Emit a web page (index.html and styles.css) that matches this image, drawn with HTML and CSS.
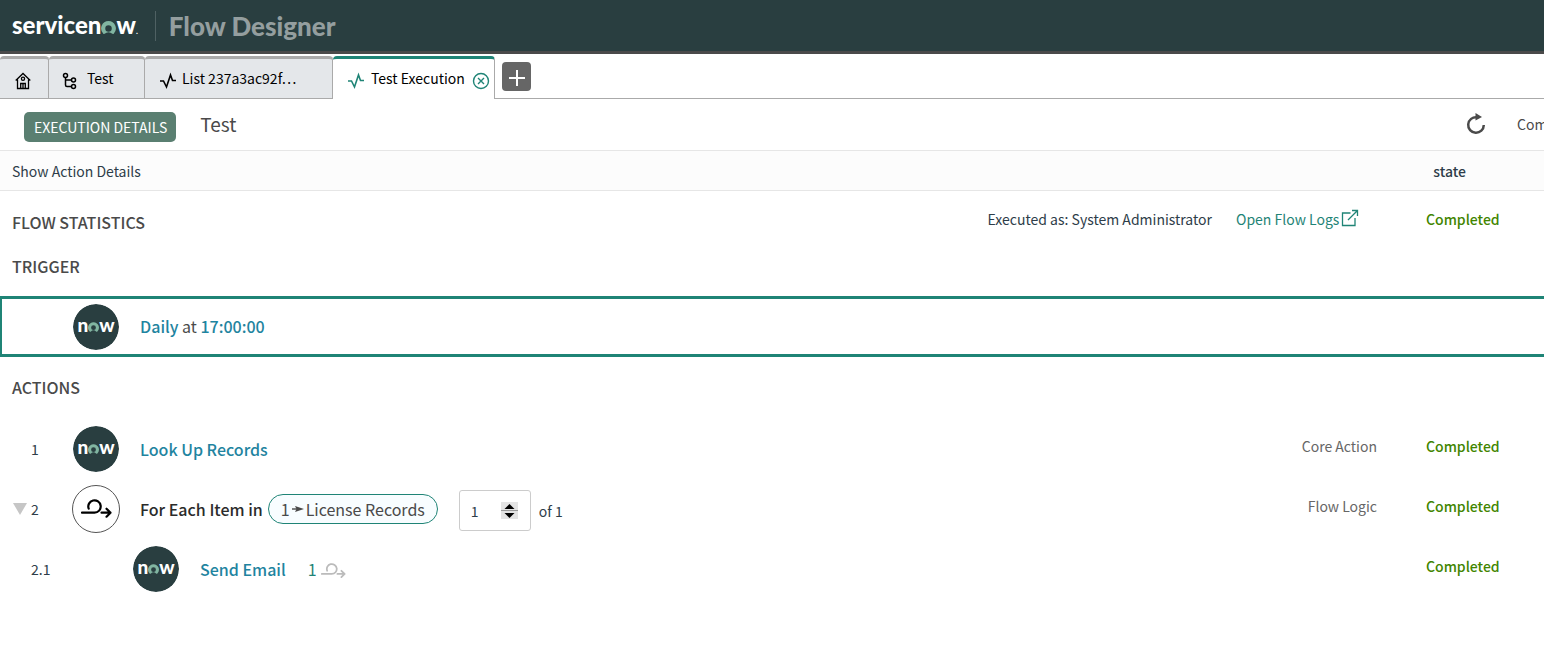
FILE: index.html
```html
<!DOCTYPE html>
<html lang="en">
<head>
<meta charset="utf-8">
<meta name="viewport" content="width=device-width, initial-scale=1">
<title>Flow Designer</title>
<link rel="stylesheet" href="styles.css">
</head>
<body>
<svg class="defs" aria-hidden="true">
  <symbol id="ring" viewBox="0 0 16 14"><path fill="currentColor" d="M8 0a8 8 0 0 0-5.600 13.600c.4.4 1 .5 1.500.2a6 6 0 0 1 8.200 0c.5.3 1.100.2 1.500-.2A8 8 0 0 0 8 0Zm0 11.500a3.500 3.500 0 1 1 0-7 3.500 3.500 0 0 1 0 7Z"/></symbol>
  <symbol id="pulse" viewBox="0 0 16 16"><path d="M0 8h3.500l3 6 4-12 2 5.500H16" fill="none" stroke="currentColor" stroke-width="1.600"/></symbol>
  <symbol id="loop" viewBox="0 0 32 20"><path d="M2 13.700h12.500a6.200 6.200 0 1 0-5.800-4M21.500 13.700h9M26.500 9.700l4 4-4 4" fill="none" stroke="currentColor" stroke-width="2.200" stroke-linecap="round" stroke-linejoin="round"/></symbol>
</svg>

<header class="banner">
  <div class="logo">servicen<svg class="logo-ring"><use href="#ring"/></svg>w<span class="logo-dot">.</span></div>
  <h1 class="product">Flow Designer</h1>
</header>

<nav class="tabs">
  <button class="tab tab-home" aria-label="Home">
    <svg class="icon" viewBox="0 0 16 18" fill="none" stroke="currentColor" stroke-width="1.300"><path d="M.7 8.500 8 1.500l7.300 7M2.500 7.500v9h11v-9M5.700 16.500v-5h4.600v5M8 11.500v5"/><circle cx="8" cy="6.800" r="1.600"/></svg>
  </button>
  <button class="tab tab-flow">
    <svg class="icon" viewBox="0 0 16 18" fill="none" stroke="currentColor" stroke-width="1.500"><circle cx="3.500" cy="3.500" r="2"/><circle cx="11.500" cy="8" r="2"/><circle cx="11.500" cy="14.500" r="2"/><path d="M3.500 5.500v7.500q0 1.500 1.500 1.500h4.500M3.500 8h6"/></svg>
    Test
  </button>
  <button class="tab tab-list"><svg class="icon"><use href="#pulse"/></svg>List 237a3ac92f…</button>
  <div class="tab tab-active">
    <svg class="icon accent"><use href="#pulse"/></svg>Test Execution
    <button class="close" aria-label="Close tab"><svg viewBox="0 0 18 18" fill="none" stroke="currentColor" stroke-width="1.400"><circle cx="9" cy="9" r="7.500"/><path d="m6 6 6 6M12 6l-6 6"/></svg></button>
  </div>
  <div class="tab-rest">
    <button class="add" aria-label="New tab"><svg viewBox="0 0 16 16"><path d="M8 0v16M0 8h16" stroke="currentColor" stroke-width="2"/></svg></button>
  </div>
</nav>

<main>
  <div class="title-row">
    <span class="badge">EXECUTION DETAILS</span>
    <h2 class="flow-name">Test</h2>
    <button class="refresh" aria-label="Refresh"><svg viewBox="0 0 20 22"><path d="M11 4.200A7.800 7.800 0 1 0 17.800 12" fill="none" stroke="currentColor" stroke-width="2.500"/><path d="M9.500 0v7.500L16 4Z" fill="currentColor"/></svg></button>
    <span class="overall">Completed</span>
  </div>

  <div class="columns-row">
    <button class="link-button">Show Action Details</button>
    <span class="state-title">state</span>
  </div>

  <section class="stats">
    <h3>FLOW STATISTICS</h3>
    <span class="executed">Executed as: System Administrator</span>
    <a class="logs" href="#logs">Open Flow Logs<svg viewBox="0 0 18 18" fill="none" stroke="currentColor" stroke-width="1.300"><path d="M9.500 4H1.500v12.500H14V9M7 11l9-9M11 1.500h5.500V7"/></svg></a>
    <span class="state">Completed</span>
  </section>

  <section>
    <h3 class="section-title">TRIGGER</h3>
    <div class="row trigger">
      <span class="number"></span>
      <span class="now">n<svg><use href="#ring"/></svg>w</span>
      <p class="name"><a href="#daily">Daily</a> at <a href="#time">17:00:00</a></p>
    </div>
  </section>

  <section>
    <h3 class="section-title actions-title">ACTIONS</h3>
    <div class="row">
      <span class="number">1</span>
      <span class="now">n<svg><use href="#ring"/></svg>w</span>
      <a class="name" href="#lookup">Look Up Records</a>
      <span class="kind">Core Action</span>
      <span class="state">Completed</span>
    </div>
    <div class="row">
      <button class="toggle" aria-label="Collapse step 2"><svg viewBox="0 0 14 12"><path d="M0 0h14L7 12Z" fill="currentColor"/></svg></button>
      <span class="number">2</span>
      <span class="logic"><svg><use href="#loop"/></svg></span>
      <strong class="name each">For Each Item in</strong>
      <span class="pill">1<svg viewBox="0 0 12 8"><path d="M0 4h5" stroke="currentColor" stroke-width="1.400"/><path d="M3 1l9 3-9 3 1.500-3Z" fill="currentColor"/></svg>License Records</span>
      <span class="stepper">
        <input id="iteration" type="number" value="1" min="1" max="1">
        <span class="arrows">
          <button aria-label="Next"><svg viewBox="0 0 10 5"><path d="M0 5h10L5 0Z"/></svg></button>
          <button aria-label="Previous"><svg viewBox="0 0 10 5"><path d="M0 0h10L5 5Z"/></svg></button>
        </span>
      </span>
      <label class="total" for="iteration">of 1</label>
      <span class="kind">Flow Logic</span>
      <span class="state">Completed</span>
    </div>
    <div class="row">
      <span class="number nested">2.1</span>
      <span class="now">n<svg><use href="#ring"/></svg>w</span>
      <a class="name" href="#email">Send Email</a>
      <span class="count">1<svg><use href="#loop"/></svg></span>
      <span class="kind"></span>
      <span class="state">Completed</span>
    </div>
  </section>
</main>
</body>
</html>
```
FILE: styles.css
```css
* { box-sizing: border-box; }

body {
  margin: 0;
  overflow-x: hidden;
  background: #fff;
  color: #2e3d49;
  font: 14px/20px "Noto Sans CJK SC", "Noto Sans", sans-serif;
}

h1, h2, h3, p { margin: 0; }
a { color: #1f8476; text-decoration: none; }
svg { display: block; flex: none; }
.defs { display: none; }

button {
  padding: 0;
  border: 0;
  background: none;
  color: inherit;
  font: inherit;
  cursor: pointer;
}

/* Banner */
.banner {
  display: flex;
  align-items: center;
  height: 54px;
  padding-left: 12px;
  background: #293e40;
  border-bottom: 3px solid #4a4a4a;
}

.logo {
  display: flex;
  align-items: baseline;
  padding: 4px 17px 0 0;
  color: #fff;
  font: 900 24px/30px Lato, sans-serif;
}

.logo-ring { width: 15px; height: 13px; color: #81b5a1; }
.logo-dot { font-size: 8px; }

.product {
  padding-left: 13px;
  border-left: 1px solid #4f6163;
  color: #949e9f;
  font: 900 26px/30px Lato, sans-serif;
}

/* Tabs */
.tabs {
  display: flex;
  height: 45px;
  padding-top: 2px;
  color: #000;
}

.tab {
  display: flex;
  align-items: center;
  padding-bottom: 2px;
  border: 1px solid #aaa;
  border-width: 3px 1px 1px 0;
  border-radius: 4px 4px 0 0;
  background: #e4e7ea;
  white-space: nowrap;
}

.icon { width: 16px; height: 18px; margin-top: 6px; }
.tab-home { width: 49px; padding-left: 15px; }
.tab-flow { width: 96px; padding-left: 13px; gap: 9px; }
.tab-list { width: 188px; padding-left: 15px; gap: 6px; }

.tab-active {
  width: 162px;
  padding-left: 15px;
  gap: 7px;
  border-top-color: #1f8476;
  border-bottom: 0;
  background: #fff;
}

.accent, .close { color: #1f8476; }
.close svg { width: 18px; height: 18px; margin-top: 6px; }

.tab-rest {
  flex: 1;
  padding: 6px 7px 0;
  border-bottom: 1px solid #aaa;
}

.add {
  display: flex;
  align-items: center;
  justify-content: center;
  width: 29px;
  height: 29px;
  padding-top: 3px;
  border-radius: 4px;
  background: #666;
  color: #fff;
}

.add svg { width: 16px; height: 16px; }

/* Title */
.title-row {
  display: flex;
  align-items: center;
  height: 52px;
  padding: 0 0 2px 24px;
  border-bottom: 1px solid #e6e6e6;
  color: #4a4a4a;
}

.badge {
  margin-top: 6px;
  padding: 5px 9px 5px 10px;
  border-radius: 5px;
  background: #5a7f71;
  color: #fff;
}

.flow-name {
  margin-left: 24px;
  font-size: 19px;
  font-weight: 400;
}

.refresh { margin-left: auto; }
.refresh svg { width: 20px; height: 22px; }
.overall { width: 58px; padding-left: 31px; }

.columns-row {
  display: flex;
  align-items: center;
  justify-content: space-between;
  height: 40px;
  padding: 0 78px 0 12px;
  border-bottom: 1px solid #e6e6e6;
  background: #fcfcfc;
}

.state-title { font-weight: 500; }

/* Statistics */
h3 {
  color: #4a4a4a;
  font-size: 16px;
  font-weight: 500;
}

.stats {
  display: flex;
  padding: 18px 0 0 12px;
}

.stats h3 { flex: 1; padding-top: 3px; }
.executed { margin-right: 24px; }
.logs { display: flex; gap: 2px; width: 190px; }
.logs svg { width: 18px; height: 18px; }

.state {
  width: 118px;
  color: #428500;
  font-weight: 500;
}

.section-title { padding: 24px 12px 20px; }
.actions-title { padding: 20px 12px 22px; }

/* Steps */
.row {
  position: relative;
  display: flex;
  align-items: center;
  height: 60px;
}

.trigger {
  height: 61px;
  border: solid #1f8476;
  border-width: 3px 0 3px 2px;
}

.number { width: 72px; padding-left: 31px; }
.trigger .number { width: 70px; }
.number.nested { width: 132px; }

.toggle {
  position: absolute;
  left: 13px;
  color: #c6c6c6;
}

.toggle svg { width: 14px; height: 12px; }

.now {
  display: flex;
  align-items: baseline;
  justify-content: center;
  width: 48px;
  height: 48px;
  border: 1px solid #fff;
  border-radius: 50%;
  background: #293e40;
  background-clip: padding-box;
  color: #fff;
  font: 900 19px/42px Lato, sans-serif;
}

.now svg { width: 11px; height: 10px; color: #81b5a1; }

.logic {
  display: flex;
  align-items: center;
  justify-content: center;
  width: 48px;
  height: 48px;
  border: 1px solid #555;
  border-radius: 50%;
  color: #000;
}

.logic svg { width: 32px; height: 20px; }

.name {
  margin: -1px 0 0 20px;
  color: #1f84a0;
  font-size: 16px;
  font-weight: 500;
}

p.name { color: #4a4a4a; font-weight: 400; }
.name a { color: #1f84a0; font-weight: 500; }
.name.each { color: #2b2b2b; }

.pill {
  display: flex;
  align-items: center;
  margin-left: 5px;
  padding: 4px 12px;
  border: 1px solid #1f8476;
  border-radius: 15px;
  background: #f8fdff;
  color: #4a4a4a;
  font-size: 16px;
}

.pill svg { width: 12px; height: 8px; margin: 0 2px; }

.stepper {
  display: flex;
  align-items: center;
  width: 72px;
  height: 41px;
  margin: 3px 8px 0 21px;
  padding: 0 12px 0 11px;
  border: 1px solid #ccc;
  border-radius: 3px;
}

.stepper input {
  width: 30px;
  padding: 0;
  border: 0;
  outline: 0;
  color: inherit;
  font: inherit;
  appearance: textfield;
}

.stepper input::-webkit-inner-spin-button { appearance: none; }

.arrows { display: grid; gap: 1px; background: #999; }

.arrows button {
  width: 17px;
  height: 8px;
  padding: 2px 3px 1px;
  background: #e4e4e4;
}

.arrows svg { width: 11px; height: 5px; }
.total { margin-top: 3px; }
.kind { flex: 1; padding-right: 49px; color: #666; text-align: right; }
.row .kind, .row .state { margin-top: -6px; }

.count {
  display: flex;
  align-items: center;
  gap: 3px;
  margin: -1px 0 0 22px;
  color: #1f8476;
  font-size: 16px;
}

.count svg { width: 26px; height: 16px; margin-top: 4px; color: #bbb; }
```
